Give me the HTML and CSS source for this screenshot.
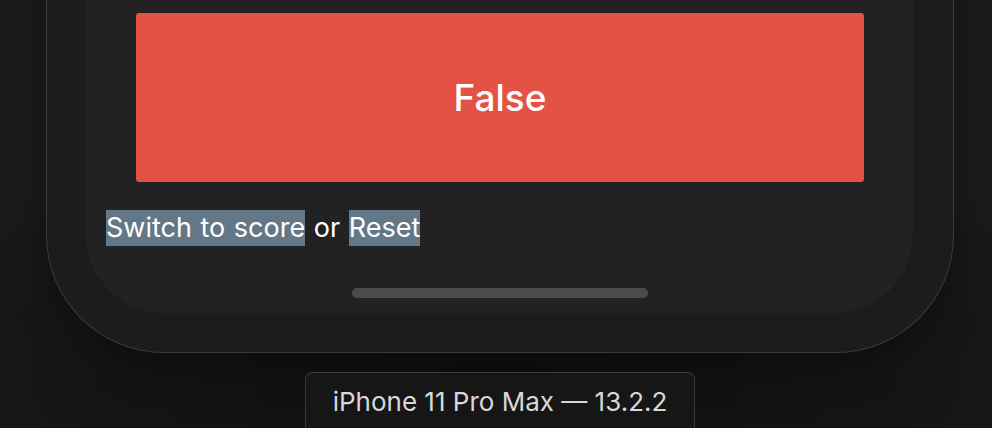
FILE: index.html
```html
<!DOCTYPE html>
<html>
<head>
<meta charset="utf-8">
<link rel="stylesheet" href="styles.css">
</head>
<body>
<div class="stage">
  <div class="phone">
    <div class="screen">
      <button class="answer">False</button>
      <p class="links"><span class="sel">Switch to score</span> or <span class="sel">Reset</span></p>
      <div class="home-bar"></div>
    </div>
  </div>
  <div class="device-label">iPhone 11 Pro Max — 13.2.2</div>
</div>
</body>
</html>
```

FILE: styles.css
```css
html, body {
  margin: 0;
  padding: 0;
  height: 100%;
  overflow: hidden;
}
body {
  background: radial-gradient(ellipse 70% 60% at 50% 88%, #0e0e0e 0%, #141414 55%, #1b1b1b 100%);
  font-family: Inter, "Noto Sans", sans-serif;
}
.stage {
  display: flex;
  flex-direction: column;
  align-items: center;
  padding-left: 8px;
}
.phone {
  box-sizing: border-box;
  width: 908px;
  margin-top: -60px;
  padding: 0 40px 39px 39px;
  background: #1c1c1c;
  border: 1px solid #3c3c3c;
  border-top: none;
  border-radius: 0 0 118px 118px;
  box-shadow: 0 10px 40px rgba(0,0,0,0.35);
}
.screen {
  background: #222222;
  border-radius: 0 0 78px 78px;
  padding: 73px 49px 15px 50px;
  display: flex;
  flex-direction: column;
}
.answer {
  height: 169px;
  border: none;
  border-radius: 3px;
  background: #e35244;
  color: #ffffff;
  font-family: Inter, "Noto Sans", sans-serif;
  font-size: 37px;
  font-weight: 500;
  padding: 0;
}
.links {
  margin: 29px 0 0 -30px;
  color: #ffffff;
  font-size: 27px;
  line-height: 34px;
  word-spacing: 1px;
}
.sel {
  background: #647786;
  padding: 1px 0 2px;
}
.home-bar {
  align-self: center;
  width: 296px;
  height: 10px;
  border-radius: 5px;
  background: #4c4c4c;
  margin-top: 43px;
}
.device-label {
  box-sizing: border-box;
  width: 390px;
  height: 80px;
  margin-top: 19px;
  border: 1px solid #3a3a3a;
  border-radius: 7px;
  background: #161616;
  color: #d8d8d8;
  font-size: 26px;
  text-align: center;
  padding-top: 14px;
  line-height: 30px;
}
```
